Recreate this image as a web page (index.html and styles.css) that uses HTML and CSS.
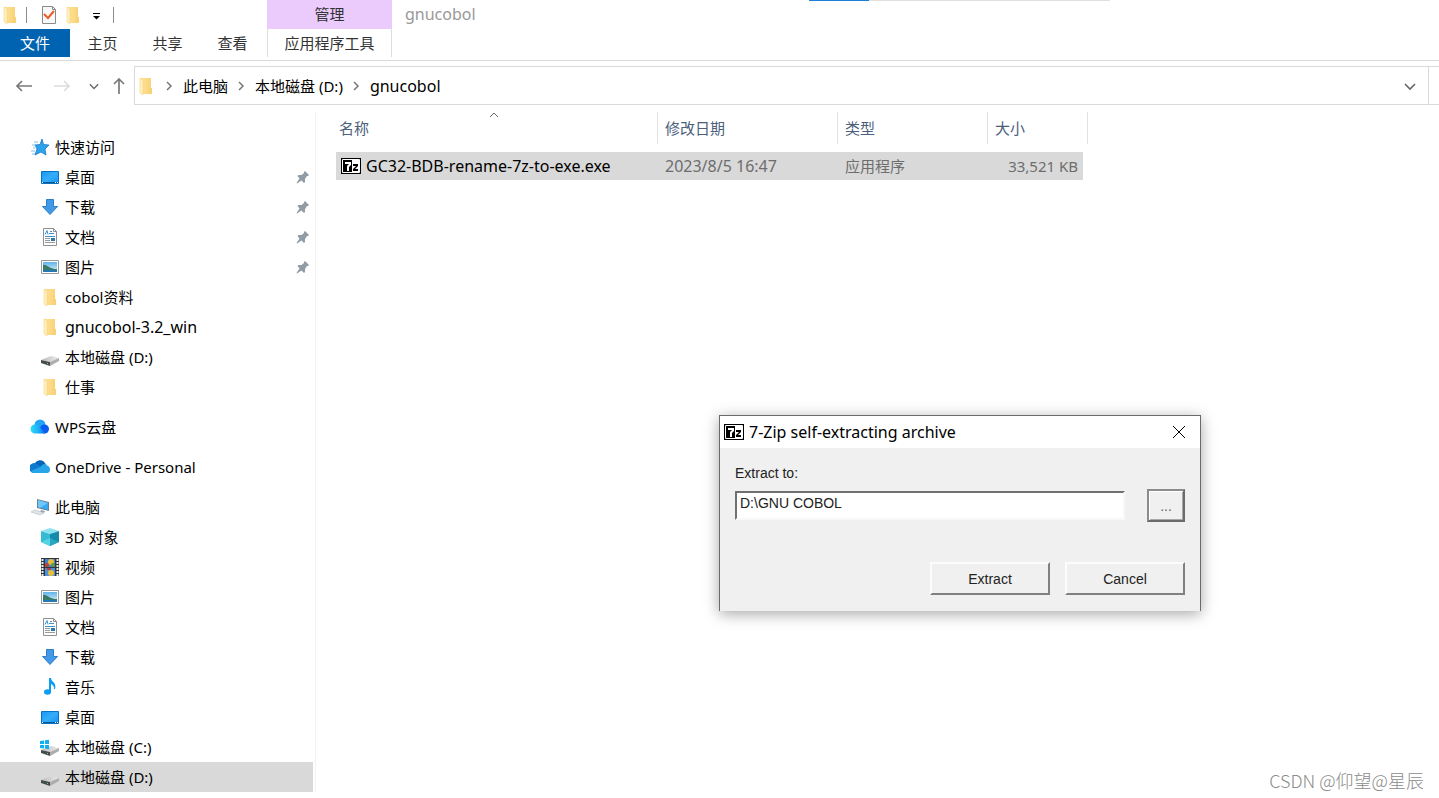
FILE: index.html
```html
<!DOCTYPE html>
<html lang="zh-CN">
<head>
    <meta charset="UTF-8">
    <meta name="viewport" content="width=device-width, initial-scale=1.0">
    <title>gnucobol</title>
    <link rel="stylesheet" href="styles.css">
</head>
<body>
    <!-- shared icons -->
    <svg class="sprite" width="0" height="0">
        <defs>
            <linearGradient id="gFolder" x1="0" x2="1"><stop offset="0" stop-color="#ffe49b"/><stop offset="1" stop-color="#f9d277"/></linearGradient>
            <linearGradient id="gDesk" x1="0" y1="0" x2="1" y2="1"><stop offset="0" stop-color="#1797f4"/><stop offset=".5" stop-color="#36adfa"/><stop offset="1" stop-color="#1292f2"/></linearGradient>
            <linearGradient id="gWps" x1="0" x2="1"><stop offset="0" stop-color="#29e0f5"/><stop offset=".5" stop-color="#22b4f8"/><stop offset="1" stop-color="#0b6cf4"/></linearGradient>
            <linearGradient id="gDisk" x1="0" x2="1"><stop offset="0" stop-color="#b9b9b9"/><stop offset="1" stop-color="#ececec"/></linearGradient>
            <linearGradient id="gSky" x1="0" y1="0" x2="0" y2="1"><stop offset="0" stop-color="#5fb4ec"/><stop offset="1" stop-color="#e2f3f8"/></linearGradient>
        </defs>
        <symbol id="folder" viewBox="0 0 20 20">
            <path d="M4 2h11v16H6z" fill="url(#gFolder)"/>
            <path d="M13 12h3v6h-3z" fill="#f9d277"/>
            <path d="M4 2l3 2v15l-3-2z" fill="#fff0be" stroke="#f1cd76" stroke-width=".5"/>
        </symbol>
        <symbol id="star" viewBox="0 0 20 20">
            <path d="M12 2l1.500 5.500 5.500.5-4 4 1 6-5-3-6 3 2-6-2-4 5-.5z" fill="#2ca3ec" stroke="#1b78bd" stroke-width=".8"/>
            <path d="M4 5h4M2 8h4M3 11h2M1 14h4M2 17h3" stroke="#7fc3ea" stroke-width="1"/>
        </symbol>
        <symbol id="desktop" viewBox="0 0 20 20">
            <path d="M1.500 4.500h17v12h-17z" fill="url(#gDesk)" stroke="#0873c4"/>
            <path d="M2 15.500h16" stroke="#0a568f"/>
            <path d="M2 15.500h1M15 15.500h1M17 15.500h1" stroke="#fff"/>
        </symbol>
        <symbol id="download" viewBox="0 0 20 20">
            <path d="M6.500 2.500h7v7h4L10 17.500 2.500 9.500h4z" fill="#4299e8" stroke="#2d7ec6"/>
        </symbol>
        <symbol id="document" viewBox="0 0 20 20">
            <path d="M3.500 1.500h10l3 3v14h-13z" fill="#fff" stroke="#909090"/>
            <path d="M13.500 1.500v3h3" fill="none" stroke="#909090"/>
            <path d="M5 7.500l2-4 1 4M10 4.500h2M9 6.500h5M5 9.500h10" fill="none" stroke="#3c93d2"/>
            <path d="M5 11.500h5M5 13.500h5M5 15.500h10" stroke="#9a9a9a"/>
            <path d="M11 11h4v3h-4z" fill="#2e78a9"/>
        </symbol>
        <symbol id="picture" viewBox="0 0 20 20">
            <path d="M1.500 3.500h17v13h-17z" fill="#fff" stroke="#999"/>
            <path d="M3 5h14v10H3z" fill="url(#gSky)"/>
            <path d="M3 8c3-1 5 2 8 3s4 1 6 1v1H3z" fill="#387a66"/>
            <path d="M3 13h14v2H3z" fill="#2479b5"/>
        </symbol>
        <symbol id="disk" viewBox="0 0 20 20">
            <path d="M1 13l10-4 8 2-9 4z" fill="url(#gDisk)"/>
            <path d="M1 13l9 2v4l-9-3z" fill="#4a4a4a"/>
            <path d="M10 15l9-4v3l-9 5z" fill="#adadad"/>
            <path d="M7 16.500h1" stroke="#5ce36b"/>
        </symbol>
        <symbol id="winmark" viewBox="0 0 20 20">
            <path d="M0 4l4-.5V7H0zM5 3.300l4-.6V7H5zM0 8h4v3.500L0 11zM5 8h4v4.200l-4-.6z" fill="#0eb2f3"/>
        </symbol>
        <symbol id="wps" viewBox="0 0 20 20">
            <circle cx="10" cy="8" r="5.500" fill="#22a6f5"/>
            <circle cx="14.500" cy="12" r="4.500" fill="#0b5cf0"/>
            <path d="M5 16.500a4.500 4.500 0 0 1 0-9c4 0 5 3 7 5l3 4z" fill="url(#gWps)"/>
        </symbol>
        <symbol id="onedrive" viewBox="0 0 20 20">
            <path d="M4 9c1-7 10-8 12-1l-5 5z" fill="#0864b8"/>
            <path d="M5 16a5 5 0 1 1 2-9l6 4-4 5z" fill="#1079d0"/>
            <path d="M11 9.500c2-3 5-3 6-1 4 1 4 7.500 0 7.500H4c-1 0-3-1-3-2z" fill="#28a4e9"/>
        </symbol>
        <symbol id="pc" viewBox="0 0 20 20">
            <path d="M7 2l12 3v9L7 11z" fill="#717e87"/>
            <path d="M8 3l10 3v7L8 10z" fill="#35a9f1"/>
            <path d="M8 3l10 3-8 5-2-1z" fill="#6cc8fb"/>
            <path d="M11 13l4 1-1 2-4-1z" fill="#9aa5ac"/>
            <path d="M1 15l4-2 9 3-4 2z" fill="#dfe5e8" stroke="#b3bdc3" stroke-width=".6"/>
        </symbol>
        <symbol id="cube" viewBox="0 0 20 20">
            <path d="M1 4l9-3 9 3-9 3z" fill="#8fe3ee"/>
            <path d="M1 4l9 3v12l-9-4z" fill="#35bcd4"/>
            <path d="M19 4l-9 3v12l9-4z" fill="#138ba9"/>
            <path d="M1 15l9-4v8z" fill="#57d3e4"/>
            <path d="M19 15l-9-4v8z" fill="#27a7c2"/>
        </symbol>
        <symbol id="video" viewBox="0 0 20 20">
            <path d="M1 1h18v18H1z" fill="#343434"/>
            <path d="M5 2h10v8H5z" fill="#3d82d4"/>
            <path d="M5 11h10v8H5z" fill="#4a91dd"/>
            <circle cx="11" cy="5" r="3" fill="#e9bd3a"/>
            <circle cx="7" cy="8" r="2" fill="#c83b34"/>
            <circle cx="13" cy="8" r="2" fill="#579944"/>
            <circle cx="11" cy="16" r="3" fill="#e9bd3a"/>
            <path d="M7 11h4v2H7z" fill="#c83b34"/>
            <path d="M2.500 2v17M17.500 2v17" stroke="#eee" stroke-width="2" stroke-dasharray="2 1"/>
        </symbol>
        <symbol id="music" viewBox="0 0 20 20">
            <path d="M9 1h2c0 4 6 4 4 11h-1c0-3-1-4-3-5v8H9z" fill="#0c9cf2"/>
            <ellipse cx="7.500" cy="15" rx="3.500" ry="2.700" fill="#0c9cf2"/>
        </symbol>
        <symbol id="pin" viewBox="0 0 14 14">
            <path d="M9 1l4 4-1 1h-1L9 9v3l-1 1-2.500-2.500L1 13.500.5 13l3-4.500L1.500 6l1-1h3l2.500-2V2z" fill="#929ca5"/>
        </symbol>
        <symbol id="sevenzip" viewBox="0 0 20 16">
            <path d="M0 0h20v16H0z" fill="#000"/>
            <path d="M1.500 1.500h17v13h-17z" fill="none" stroke="#fff"/>
            <path d="M11 2h7v12h-7z" fill="#fff"/>
            <path d="M4 4h6v3L8 9v4H6V8l2-2H4z" fill="#fff"/>
            <path d="M12 6h5v2l-3 3h3v2h-5v-2l3-3h-3z" fill="#000"/>
        </symbol>
        <symbol id="crumb" viewBox="0 0 10 10">
            <path d="M3 1l4 4-4 4" fill="none" stroke="#777" stroke-width="1.500"/>
        </symbol>
        <symbol id="down" viewBox="0 0 12 12">
            <path d="M1 4l5 5 5-5" fill="none" stroke="#666" stroke-width="1.600"/>
        </symbol>
        <symbol id="arrow" viewBox="0 0 16 16">
            <path d="M16 8H1M6 3L1 8l5 5" fill="none" stroke="currentColor" stroke-width="1.700"/>
        </symbol>
    </svg>

    <header class="ribbon">
        <div class="ribbon-left">
            <div class="quick-access">
                <svg class="icon"><use href="#folder"/></svg>
                <span class="divider"></span>
                <button class="tool" aria-label="属性">
                    <svg class="icon" viewBox="0 0 20 20">
                        <path d="M3.500 1.500h10l3 3v14h-13z" fill="#f8f8f8" stroke="#8a8a8a"/>
                        <path d="M13.500 1.500v3h3" fill="none" stroke="#8a8a8a"/>
                        <path d="M5 9l4 4 6-7" fill="none" stroke="#ec5b24" stroke-width="2"/>
                    </svg>
                </button>
                <button class="tool" aria-label="新建文件夹"><svg class="icon"><use href="#folder"/></svg></button>
                <button class="tool" aria-label="自定义快速访问工具栏">
                    <svg class="icon" viewBox="0 0 20 20"><path d="M6 8.500h7" stroke="#000"/><path d="M6 11h7l-3.500 3.500z" fill="#000"/></svg>
                </button>
                <span class="divider"></span>
            </div>
            <nav class="tabs">
                <button class="tab file">文件</button>
                <button class="tab">主页</button>
                <button class="tab">共享</button>
                <button class="tab">查看</button>
            </nav>
        </div>
        <div class="context">
            <div class="context-title">管理</div>
            <button class="context-tab">应用程序工具</button>
        </div>
        <h1 class="window-title">gnucobol</h1>
        <div class="top-strip"></div>
    </header>

    <div class="location">
        <div class="history">
            <button class="tool" aria-label="后退"><svg class="small"><use href="#arrow"/></svg></button>
            <button class="tool disabled" aria-label="前进"><svg class="small flip"><use href="#arrow"/></svg></button>
            <button class="tool narrow" aria-label="最近浏览的位置"><svg class="chevron"><use href="#down"/></svg></button>
            <button class="tool narrow" aria-label="上移"><svg class="small up"><use href="#arrow"/></svg></button>
        </div>
        <div class="address">
            <svg class="icon"><use href="#folder"/></svg>
            <svg class="sep"><use href="#crumb"/></svg>
            <a href="#">此电脑</a>
            <svg class="sep"><use href="#crumb"/></svg>
            <a href="#">本地磁盘 (D:)</a>
            <svg class="sep"><use href="#crumb"/></svg>
            <a class="latin" href="#">gnucobol</a>
            <button class="tool expand" aria-label="展开"><svg class="tiny"><use href="#down"/></svg></button>
        </div>
        <div class="refresh"></div>
    </div>

    <div class="main">
        <nav class="tree">
            <div class="group">
                <a class="item root" href="#"><svg class="icon"><use href="#star"/></svg>快速访问</a>
                <a class="item" href="#"><svg class="icon"><use href="#desktop"/></svg>桌面<svg class="pin"><use href="#pin"/></svg></a>
                <a class="item" href="#"><svg class="icon"><use href="#download"/></svg>下载<svg class="pin"><use href="#pin"/></svg></a>
                <a class="item" href="#"><svg class="icon"><use href="#document"/></svg>文档<svg class="pin"><use href="#pin"/></svg></a>
                <a class="item" href="#"><svg class="icon"><use href="#picture"/></svg>图片<svg class="pin"><use href="#pin"/></svg></a>
                <a class="item" href="#"><svg class="icon"><use href="#folder"/></svg>cobol资料</a>
                <a class="item latin" href="#"><svg class="icon"><use href="#folder"/></svg>gnucobol-3.2_win</a>
                <a class="item" href="#"><svg class="icon"><use href="#disk"/></svg>本地磁盘 (D:)</a>
                <a class="item" href="#"><svg class="icon"><use href="#folder"/></svg>仕事</a>
            </div>
            <div class="group">
                <a class="item root" href="#"><svg class="icon"><use href="#wps"/></svg>WPS云盘</a>
            </div>
            <div class="group">
                <a class="item root" href="#"><svg class="icon"><use href="#onedrive"/></svg>OneDrive - Personal</a>
            </div>
            <div class="group">
                <a class="item root" href="#"><svg class="icon"><use href="#pc"/></svg>此电脑</a>
                <a class="item" href="#"><svg class="icon"><use href="#cube"/></svg>3D 对象</a>
                <a class="item" href="#"><svg class="icon"><use href="#video"/></svg>视频</a>
                <a class="item" href="#"><svg class="icon"><use href="#picture"/></svg>图片</a>
                <a class="item" href="#"><svg class="icon"><use href="#document"/></svg>文档</a>
                <a class="item" href="#"><svg class="icon"><use href="#download"/></svg>下载</a>
                <a class="item" href="#"><svg class="icon"><use href="#music"/></svg>音乐</a>
                <a class="item" href="#"><svg class="icon"><use href="#desktop"/></svg>桌面</a>
                <a class="item" href="#"><svg class="icon"><use href="#disk"/><use href="#winmark"/></svg>本地磁盘 (C:)</a>
                <a class="item selected" href="#"><svg class="icon"><use href="#disk"/></svg>本地磁盘 (D:)</a>
            </div>
        </nav>

        <main class="files">
            <table class="file-table">
                <colgroup>
                    <col class="col-name">
                    <col class="col-date">
                    <col class="col-type">
                    <col class="col-size">
                </colgroup>
                <thead>
                    <tr>
                        <th class="name">名称<svg class="sort" viewBox="0 0 10 6"><path d="M1 5l4-4 4 4" fill="none" stroke="#666"/></svg></th>
                        <th>修改日期</th>
                        <th>类型</th>
                        <th>大小</th>
                    </tr>
                </thead>
                <tbody>
                    <tr>
                        <td class="name"><div class="file-name latin"><svg class="exe"><use href="#sevenzip"/></svg>GC32-BDB-rename-7z-to-exe.exe</div></td>
                        <td class="latin">2023/8/5 16:47</td>
                        <td>应用程序</td>
                        <td class="size">33,521 KB</td>
                    </tr>
                </tbody>
            </table>
        </main>
    </div>

    <form class="dialog">
        <div class="dialog-title latin">
            <svg class="exe"><use href="#sevenzip"/></svg>
            <span>7-Zip self-extracting archive</span>
            <button type="button" class="tool close" aria-label="关闭">
                <svg class="small" viewBox="0 0 16 16"><path d="M2 2l12 12M14 2L2 14" stroke="#000"/></svg>
            </button>
        </div>
        <div class="dialog-body">
            <label for="path">Extract to:</label>
            <div class="path-row">
                <input id="path" type="text" value="D:\GNU COBOL">
                <button type="button" class="push browse">...</button>
            </div>
            <div class="actions">
                <button type="button" class="push">Extract</button>
                <button type="button" class="push">Cancel</button>
            </div>
        </div>
    </form>

    <div class="watermark">CSDN @仰望@星辰</div>
</body>
</html>
```
FILE: styles.css
```css
* {
    box-sizing: border-box;
}

body {
    margin: 0;
    min-height: 100vh;
    position: relative;
    background-color: #ffffff;
    color: #000000;
    font-family: 'Noto Sans', 'Noto Sans CJK SC', sans-serif;
    font-size: 15px;
    line-height: 20px;
}

button {
    margin: 0;
    padding: 0;
    border: none;
    background: none;
    color: inherit;
    font: inherit;
}

a {
    color: inherit;
    text-decoration: none;
}

svg {
    display: block;
    flex: none;
}

.sprite {
    position: absolute;
}

.latin {
    font-size: 16px;
}

.icon {
    width: 20px;
    height: 20px;
}

.small {
    width: 16px;
    height: 16px;
}

.tiny {
    width: 12px;
    height: 12px;
}

.chevron {
    width: 10px;
    height: 10px;
}

.tool {
    display: flex;
    align-items: center;
    justify-content: center;
}

/* Ribbon */
.ribbon {
    position: relative;
    display: flex;
    height: 61px;
    border-bottom: 1px solid #dadada;
}

.ribbon-left {
    padding-right: 2px;
}

.quick-access {
    display: flex;
    align-items: center;
    gap: 4px;
    height: 29px;
}

.quick-access .divider {
    width: 1px;
    height: 16px;
    margin: 0 8px 0 2px;
    background-color: #8c8c8c;
}

.tabs {
    display: flex;
}

.tab {
    width: 65px;
    height: 28px;
    color: #333333;
}

.tab.file {
    width: 70px;
    background-color: #0063b1;
    color: #ffffff;
}

.context {
    width: 125px;
    text-align: center;
    color: #333333;
}

.context-title {
    height: 29px;
    line-height: 28px;
    background-color: #ebcbfb;
}

.context-tab {
    width: 100%;
    height: 28px;
    border-left: 1px solid #dddddd;
    border-right: 1px solid #dddddd;
}

.window-title {
    margin: 0;
    padding: 0 13px;
    font-size: 16px;
    font-weight: 400;
    line-height: 28px;
    color: #999999;
}

.top-strip {
    position: absolute;
    top: 0;
    left: 809px;
    width: 301px;
    height: 1px;
    background: linear-gradient(to right, #1a7fd6 60px, #e0e0e0 60px);
}

/* Address bar */
.location {
    display: flex;
    padding-top: 5px;
}

.history {
    display: flex;
    align-items: center;
    width: 134px;
    padding-left: 5px;
    color: #7a7a7a;
}

.history .tool {
    width: 38px;
}

.history .narrow {
    width: 25px;
}

.history .disabled {
    color: #dcdcdc;
}

.flip {
    transform: rotate(180deg);
}

.up {
    transform: rotate(90deg);
}

.address {
    flex: 1;
    display: flex;
    align-items: center;
    height: 39px;
    padding: 0 12px 0 1px;
    border: 1px solid #d9d9d9;
}

.sep {
    width: 10px;
    height: 10px;
    margin: 0 9px 0 8px;
}

.expand {
    margin-left: auto;
}

.refresh {
    width: 10px;
    border-top: 1px solid #d9d9d9;
    border-bottom: 1px solid #d9d9d9;
}

/* Navigation tree */
.main {
    display: flex;
    padding-top: 7px;
}

.tree {
    width: 316px;
    padding: 20px 2px 0 0;
    border-right: 1px solid #f2f2f2;
}

.group {
    margin-bottom: 10px;
}

.group:last-child {
    margin-bottom: 0;
}

.item {
    display: flex;
    align-items: center;
    gap: 5px;
    height: 30px;
    padding: 0 3px 0 40px;
}

.item.root {
    padding-left: 30px;
}

.item.selected {
    background-color: #d9d9d9;
}

.pin {
    width: 14px;
    height: 14px;
    margin-left: auto;
}

/* File list */
.files {
    flex: 1;
    padding-left: 20px;
}

.file-table {
    width: 752px;
    table-layout: fixed;
    border-collapse: separate;
    border-spacing: 0;
}

.col-name {
    width: 322px;
}

.col-date {
    width: 180px;
}

.col-type {
    width: 150px;
}

.col-size {
    width: 100px;
}

.file-table th {
    position: relative;
    height: 32px;
    padding: 0 7px;
    border-right: 1px solid #e2e2e2;
    color: #4c607a;
    font-weight: 400;
    text-align: left;
}

.file-table th.name {
    padding-left: 3px;
}

.sort {
    position: absolute;
    top: 0;
    left: 153px;
    width: 10px;
    height: 6px;
}

.file-table td {
    height: 36px;
    padding: 0 7px;
    border-top: 8px solid transparent;
    background-color: #d9d9d9;
    background-clip: padding-box;
    color: #6d6d6d;
}

.file-table td.name {
    padding-left: 5px;
    color: #000000;
}

.file-table td.size {
    padding-right: 5px;
    border-right: 5px solid transparent;
    text-align: right;
}

.file-name {
    display: flex;
    align-items: center;
    gap: 5px;
}

.exe {
    width: 20px;
    height: 16px;
}

/* Self-extractor window */
.dialog {
    position: absolute;
    top: 415px;
    left: 719px;
    width: 482px;
    border: 1px solid #6b6b6b;
    border-bottom: none;
    background-color: #f0f0f0;
    box-shadow: 0 3px 14px rgba(0, 0, 0, 0.35);
}

.dialog-title {
    display: flex;
    align-items: center;
    gap: 5px;
    height: 32px;
    padding: 0 13px 0 4px;
    background-color: #ffffff;
}

.close {
    margin-left: auto;
}

.dialog-body {
    padding: 15px 15px 16px;
    font-family: 'Liberation Sans', Arial, sans-serif;
    font-size: 14px;
    color: #222222;
}

.dialog-body label {
    display: block;
    height: 26px;
}

.path-row {
    display: flex;
    align-items: center;
    justify-content: space-between;
    height: 33px;
}

.path-row input {
    width: 390px;
    height: 29px;
    padding: 0 3px 5px;
    border: 2px solid;
    border-color: #707070 #f8f8f8 #f8f8f8 #707070;
    background-color: #ffffff;
    color: inherit;
    font: inherit;
}

.actions {
    display: flex;
    justify-content: flex-end;
    gap: 15px;
    margin-top: 40px;
}

.push {
    width: 120px;
    height: 33px;
    border: 2px solid;
    border-color: #fcfcfc #808080 #808080 #fcfcfc;
}

.push.browse {
    width: 38px;
    border-color: #8c8c8c #6b6b6b #6b6b6b #8c8c8c;
    box-shadow: inset 1px 1px 0 #ffffff, inset -1px -1px 0 #a8a8a8;
    color: #666666;
}

.watermark {
    position: absolute;
    right: 15px;
    bottom: 8px;
    color: #8c8c8c;
    font-family: 'Noto Sans CJK SC', sans-serif;
    font-size: 18px;
    font-weight: 300;
}
```
